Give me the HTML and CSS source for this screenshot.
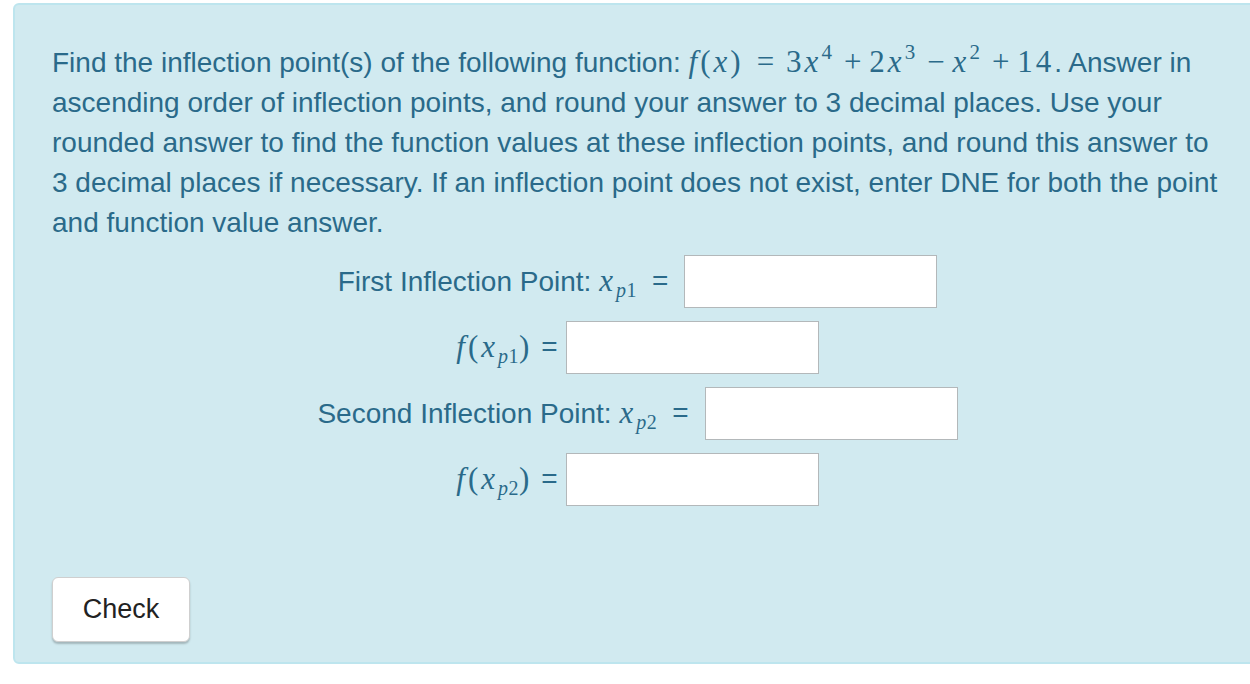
FILE: index.html
```html
<!DOCTYPE html>
<html>
<head>
<meta charset="utf-8">
<link rel="stylesheet" href="styles.css">
</head>
<body>
<div class="alert">
  <p class="question">Find the inflection point(s) of the following function: <span class="m"><i>f</i>(<i>x</i>)<span class="rel">=</span>3<i>x</i><sup>4</sup><span class="bin">+</span>2<i>x</i><sup>3</sup><span class="bin">−</span><i>x</i><sup>2</sup><span class="bin">+</span>14</span>. Answer in ascending order of inflection points, and round your answer to 3 decimal places. Use your rounded answer to find the function values at these inflection points, and round this answer to 3 decimal places if necessary. If an inflection point does not exist, enter DNE for both the point and function value answer.</p>
  <div class="rows">
    <div class="row">
      <span class="label">First Inflection Point: <span class="m"><i>x</i><sub><i>p</i>1</sub></span></span>
      <span class="eq wide">=</span>
      <span class="field"></span>
    </div>
    <div class="row">
      <span class="label"><span class="m"><i>f</i>(<i>x</i><sub><i>p</i>1</sub>)</span></span>
      <span class="eq">=</span>
      <span class="field"></span>
    </div>
    <div class="row">
      <span class="label">Second Inflection Point: <span class="m"><i>x</i><sub><i>p</i>2</sub></span></span>
      <span class="eq wide">=</span>
      <span class="field"></span>
    </div>
    <div class="row">
      <span class="label"><span class="m"><i>f</i>(<i>x</i><sub><i>p</i>2</sub>)</span></span>
      <span class="eq">=</span>
      <span class="field"></span>
    </div>
  </div>
  <button class="check" type="button">Check</button>
</div>
</body>
</html>
```
FILE: styles.css
```css
html, body {
  margin: 0;
  padding: 0;
  background: #ffffff;
  overflow: hidden;
}
body {
  width: 1250px;
  height: 684px;
  font-family: "Liberation Sans", Arial, sans-serif;
}
.alert {
  box-sizing: border-box;
  margin: 3px 0 0 13px;
  width: 1244px;
  height: 661px;
  background: #d1eaf0;
  border: 2px solid #bde5ee;
  border-radius: 6px;
  padding: 37px 32px 0 37px;
  color: #2a6a8a;
}
.question {
  margin: 0;
  font-size: 28px;
  line-height: 40px;
}
.m {
  font-family: "Liberation Serif", "Times New Roman", serif;
  font-size: 31px;
  letter-spacing: 3px;
  white-space: nowrap;
}
.m i {
  font-style: italic;
}
.m .rel {
  margin: 0 9px 0 13px;
}
.m .bin {
  margin: 0 5px 0 9px;
}
.m sup {
  font-size: 21px;
  vertical-align: 13px;
  line-height: 0;
}
.m sub {
  font-size: 20px;
  vertical-align: -6px;
  line-height: 0;
  letter-spacing: 0.5px;
}
.rows {
  margin-top: 12px;
  display: flex;
  flex-direction: column;
  align-items: center;
  gap: 14px;
}
.row {
  display: flex;
  align-items: center;
  height: 52px;
  font-size: 28px;
}
.label {
  white-space: nowrap;
}
.eq {
  margin: 0 8px 0 9px;
}
.eq.wide {
  margin: 0 16px 0 15px;
}
.field {
  box-sizing: border-box;
  width: 253px;
  height: 53px;
  background: #ffffff;
  border: 1px solid #b3b8ba;
}
.check {
  display: block;
  margin-top: 72px;
  width: 138px;
  height: 65px;
  background: #ffffff;
  border: 1px solid #cfcfcf;
  border-radius: 6px;
  box-shadow: 0 2px 2px rgba(0, 0, 0, 0.22);
  font-family: "Liberation Sans", Arial, sans-serif;
  font-size: 27px;
  color: #222222;
  padding: 0;
}
```
